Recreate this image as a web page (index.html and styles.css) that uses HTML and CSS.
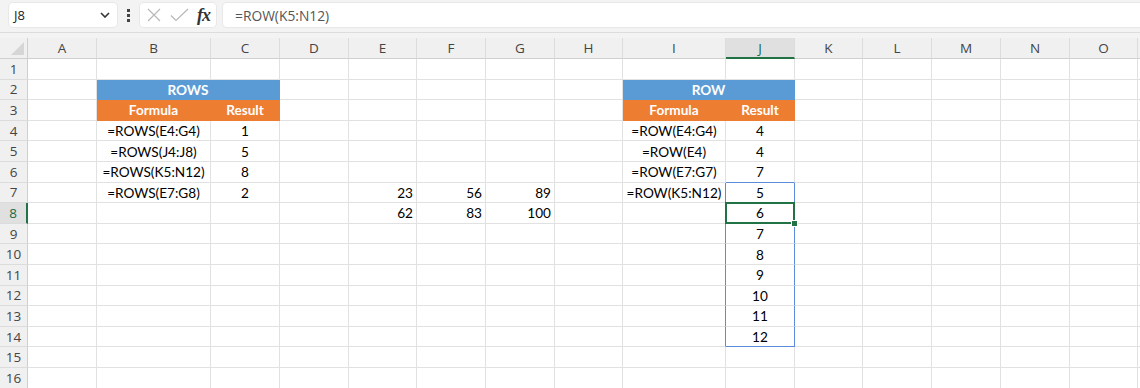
FILE: index.html
```html
<!DOCTYPE html>
<html lang="en">
<head>
  <meta charset="UTF-8">
  <title>ROWS vs ROW</title>
  <link rel="stylesheet" href="styles.css">
</head>
<body>

  <div class="topbar">
    <div class="name-box">
      <span>J8</span>
      <svg class="chevron" width="10" height="6" viewBox="0 0 10 6"><path d="M1 1l4 4 4-4" fill="none" stroke="#333" stroke-width="1.6"/></svg>
    </div>
    <div class="dots"><span></span><span></span><span></span></div>
    <div class="fx-buttons">
      <svg width="16" height="14" viewBox="0 0 16 14"><path d="M2 1l12 12M14 1L2 13" fill="none" stroke="#b8b8b8" stroke-width="1.2"/></svg>
      <svg width="19" height="14" viewBox="0 0 19 14"><path d="M1 7.5l5 5L18 1" fill="none" stroke="#b8b8b8" stroke-width="1.2"/></svg>
      <span class="fx">fx</span>
    </div>
    <div class="formula-input">=ROW(K5:N12)</div>
  </div>

  <div class="sheet" id="sheet"></div>

  <script>
    const letters = "ABCDEFGHIJKLMNO".split("");

    // [text, kind, span]
    const data = {
      B2: ["ROWS", "title", 2], B3: ["Formula", "head"], C3: ["Result", "head"],
      B4: "=ROWS(E4:G4)", C4: "1",
      B5: "=ROWS(J4:J8)", C5: "5",
      B6: "=ROWS(K5:N12)", C6: "8",
      B7: "=ROWS(E7:G8)", C7: "2",
      E7: 23, F7: 56, G7: 89,
      E8: 62, F8: 83, G8: 100,
      I2: ["ROW", "title", 2], I3: ["Formula", "head"], J3: ["Result", "head"],
      I4: "=ROW(E4:G4)", J4: "4",
      I5: "=ROW(E4)", J5: "4",
      I6: "=ROW(E7:G7)", J6: "7",
      I7: "=ROW(K5:N12)"
    };
    // spilled array from J7
    for (let r = 7; r <= 14; r++) data["J" + r] = String(r - 2);

    const sheet = document.getElementById("sheet");

    function add(cls, text, span) {
      const el = document.createElement("div");
      el.className = cls;
      if (text !== undefined) el.textContent = text;
      if (span) el.style.gridColumn = "span " + span;
      sheet.appendChild(el);
      return el;
    }

    add("corner");
    letters.forEach(l => add("col-head" + (l === "J" ? " selected" : ""), l));
    add("col-head filler");

    for (let r = 1; r <= 16; r++) {
      add("row-head" + (r === 8 ? " selected" : ""), r);
      let skip = 0;
      letters.forEach(l => {
        if (skip) { skip--; return; }
        let v = data[l + r];
        let cls = "cell";
        let span;
        if (Array.isArray(v)) {
          cls += " " + v[1];
          span = v[2];
          if (span) skip = span - 1;
          v = v[0];
        } else if (typeof v === "number") {
          cls += " num";
        }
        if (l === "I" && r >= 7 && r <= 14) cls += " spill-left";
        if (l === "J" && r === 6) cls += " spill-top";
        if (l === "J" && r >= 7 && r <= 14) cls += " spill";
        if (l === "J" && r === 14) cls += " spill-end";
        if (l === "J" && r === 8) cls += " active";
        add(cls, v, span);
      });
      add("cell filler");
    }
  </script>
</body>
</html>
```

FILE: styles.css
```css
body {
  margin: 0;
  background-color: #f3f3f3;
  overflow: hidden;
  font-family: "Open Sans", "Noto Sans", sans-serif;
}
.topbar {
  display: flex;
  align-items: center;
  height: 33px;
  box-sizing: border-box;
  padding: 0 0 2px 9px;
  border-bottom: 1px solid #dcdcdc;
}
.name-box {
  width: 108px;
  height: 24px;
  box-sizing: border-box;
  display: flex;
  align-items: center;
  justify-content: space-between;
  padding: 0 7px 0 5px;
  background-color: #fff;
  border-radius: 4px;
  box-shadow: 0 0 0 1px #e8e8e8;
  font-size: 13px;
  color: #222;
}
.dots {
  width: 23px;
  display: flex;
  flex-direction: column;
  align-items: center;
  gap: 2px;
}
.dots span {
  width: 3px;
  height: 3px;
  background-color: #444;
}
.fx-buttons {
  width: 76px;
  height: 24px;
  box-sizing: border-box;
  display: flex;
  align-items: center;
  gap: 8px;
  padding-left: 6px;
  background-color: #fff;
  border-radius: 4px;
  box-shadow: 0 0 0 1px #e8e8e8;
}
.fx {
  font-family: "Liberation Serif", serif;
  font-style: italic;
  font-weight: bold;
  font-size: 18px;
  letter-spacing: -1px;
  color: #333;
}
.formula-input {
  flex: 1;
  height: 24px;
  margin-left: 7px;
  padding-left: 12px;
  display: flex;
  align-items: center;
  background-color: #fff;
  border-radius: 4px 0 0 4px;
  box-shadow: 0 0 0 1px #e8e8e8;
  font-size: 13.8px;
  color: #555;
}
.sheet {
  margin-top: 5px;
  display: grid;
  grid-template-columns: 28px 69px 114px 69px 69px 68px 69px 69px 68px 103px 69px 68px 69px 69px 69px 68px 1fr;
  grid-template-rows: 21px;
  grid-auto-rows: 20.6px;
}
.corner, .col-head, .row-head {
  background-color: #f0f0f0;
  color: #444;
  font-size: 13.5px;
  display: flex;
  align-items: center;
  justify-content: center;
  box-sizing: border-box;
}
.corner {
  position: relative;
  border-right: 1px solid #cfcfcf;
  border-bottom: 1px solid #cfcfcf;
}
.corner::after {
  content: "";
  position: absolute;
  right: 3px;
  bottom: 3px;
  border-style: solid;
  border-width: 0 0 13px 13px;
  border-color: transparent transparent #d6d6d6 transparent;
}
.col-head {
  border-right: 1px solid #dcdcdc;
  border-bottom: 1px solid #cfcfcf;
}
.col-head.selected {
  background-color: #e0e0e0;
  color: #1d6b3f;
  border-bottom: 2px solid #217346;
}
.row-head {
  border-right: 1px solid #cfcfcf;
  border-bottom: 1px solid #dcdcdc;
}
.row-head.selected {
  background-color: #e0e0e0;
  color: #1d6b3f;
  border-right: 2px solid #217346;
}
.col-head.filler {
  border-right: none;
}
.cell {
  box-sizing: border-box;
  border-right: 1px solid #e1e1e1;
  border-bottom: 1px solid #e1e1e1;
  background-color: #fff;
  display: flex;
  align-items: center;
  justify-content: center;
  padding-top: 1px;
  font-family: Lato, "Liberation Sans", sans-serif;
  font-size: 13.6px;
  color: #000;
  white-space: nowrap;
}
.cell.num {
  justify-content: flex-end;
  padding-right: 3px;
}
.cell.title {
  background-color: #5b9bd5;
  border-color: #5b9bd5;
  color: #fff;
  font-weight: bold;
}
.cell.head {
  background-color: #ed7d31;
  border-color: #ed7d31;
  color: #fff;
  font-weight: bold;
}
.cell.spill-left {
  border-right-color: #5b8bd9;
}
.cell.spill-top {
  border-bottom-color: #5b8bd9;
}
.cell.spill {
  border-right-color: #5b8bd9;
}
.cell.spill-end {
  border-bottom-color: #5b8bd9;
}
.cell.active {
  position: relative;
}
.cell.active::after {
  content: "";
  position: absolute;
  top: -1px;
  left: -1px;
  right: -1px;
  bottom: -1px;
  border: 2px solid #217346;
  z-index: 1;
}
.cell.active::before {
  content: "";
  position: absolute;
  right: -3px;
  bottom: -3px;
  width: 5px;
  height: 5px;
  background-color: #217346;
  box-shadow: 0 0 0 1px #fff;
  z-index: 2;
}
.cell.filler {
  border-right: none;
}
```
